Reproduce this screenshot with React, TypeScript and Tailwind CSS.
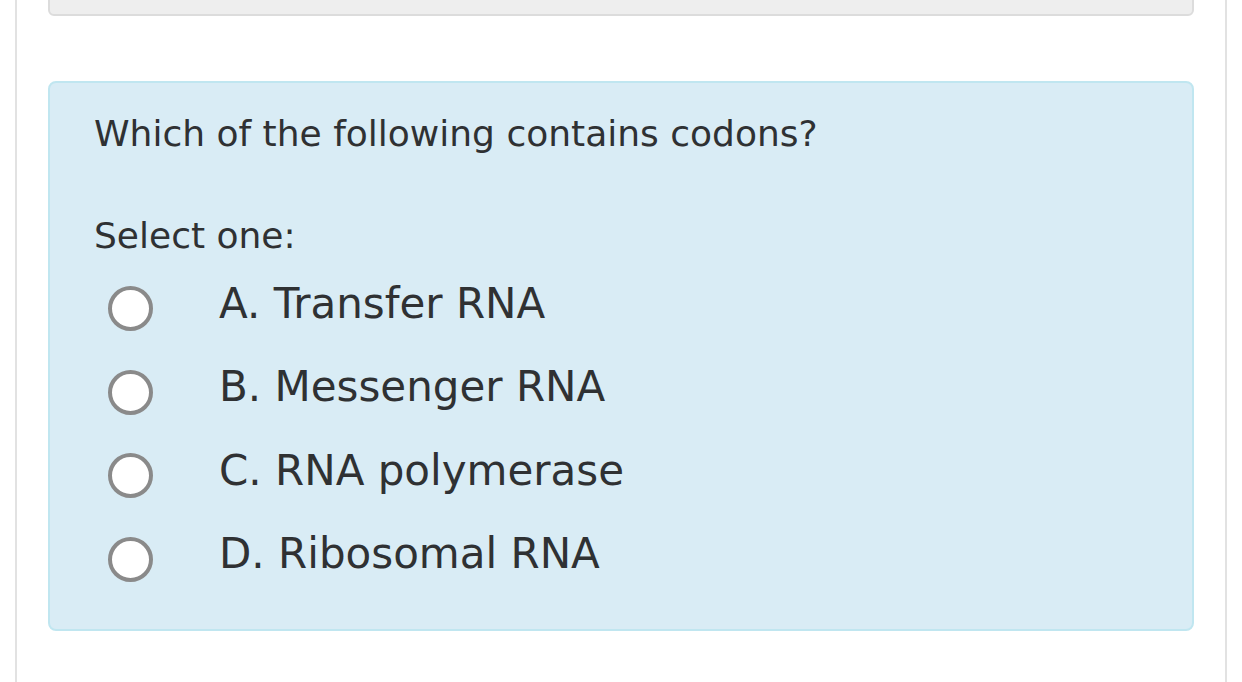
import React from "react";

const options = ["A. Transfer RNA", "B. Messenger RNA", "C. RNA polymerase", "D. Ribosomal RNA"];

export default function App() {
  return (
    <div className="h-[682px] w-[1242px] bg-white overflow-hidden" style={{ fontFamily: '"DejaVu Sans", Verdana, sans-serif' }}>
      <div className="ml-[15px] flex h-full w-[1212px] flex-col border-x-2 border-[#e2e2e2] px-[31px]">
        <div className="-mt-[30px] h-[46px] shrink-0 rounded-[6px] border-2 border-[#dcdcdc] bg-[#eeeeee]" />
        <div className="mt-[65px] h-[550px] shrink-0 rounded-[8px] border-2 border-[#c0e6f0] bg-[#d9ecf5] pl-[44px] pt-[27px] text-[#2f3133]">
          <div className="text-[36px] leading-[48px]">Which of the following contains codons?</div>
          <div className="mt-[54px] text-[36px] leading-[48px]">Select one:</div>
          <div className="mt-[7px] flex flex-col">
            {options.map((o) => (
              <div key={o} className="flex h-[83.5px] items-center">
                <div className="ml-[14px] h-[45px] w-[45px] rounded-full border-[4px] border-[#8a8a8a] bg-white" />
                <div className="ml-[66px] -mt-[10px] text-[42px] leading-[50px]">{o}</div>
              </div>
            ))}
          </div>
        </div>
      </div>
    </div>
  );
}
